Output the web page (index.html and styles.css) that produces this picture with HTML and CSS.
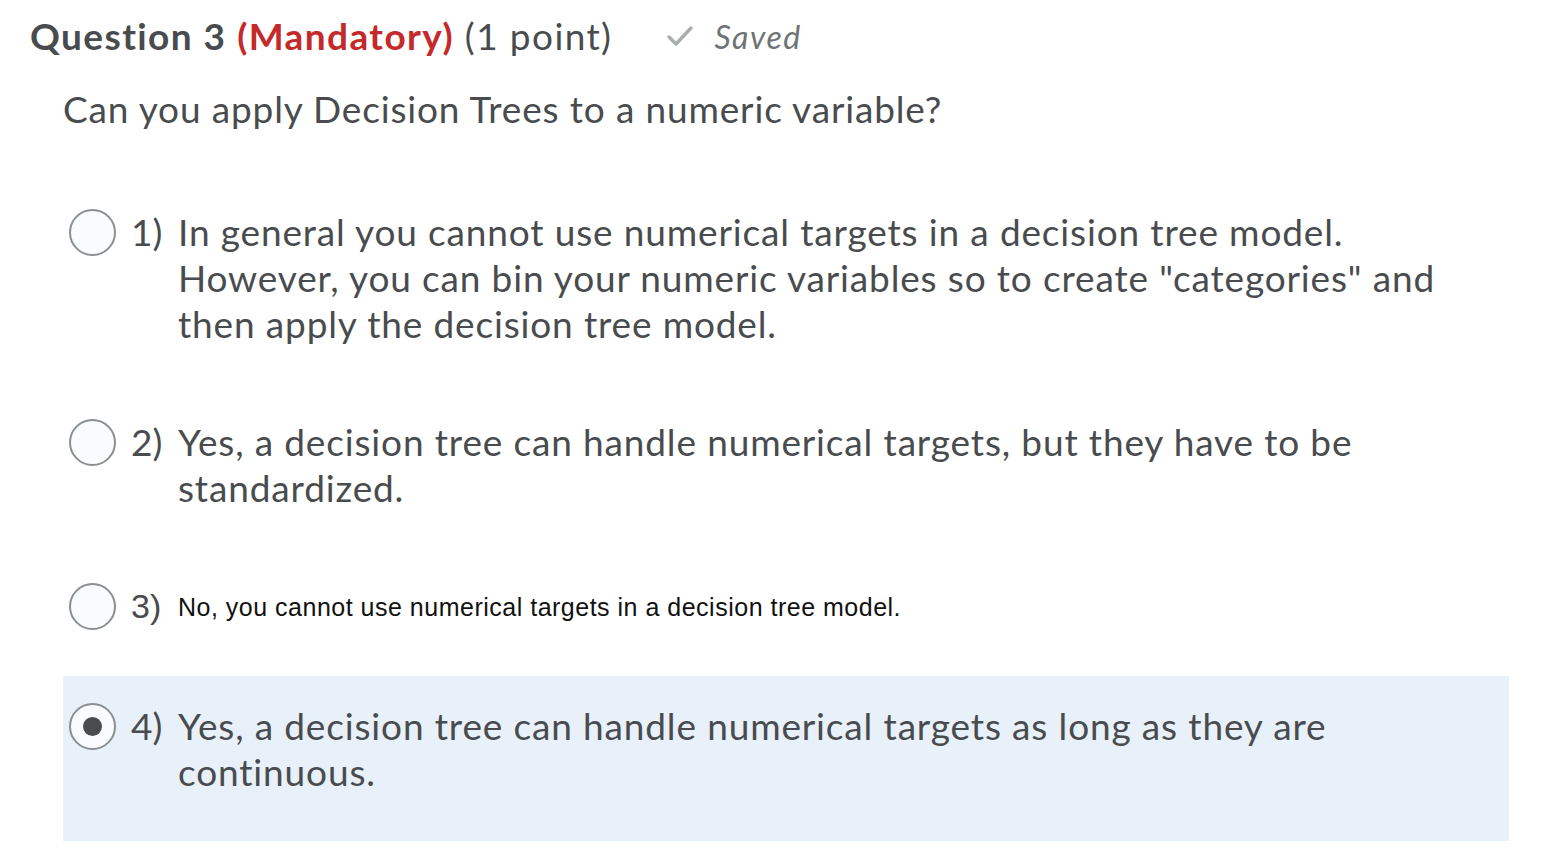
FILE: index.html
```html
<!DOCTYPE html>
<html lang="en">
<head>
<meta charset="utf-8">
<link rel="stylesheet" href="styles.css">
</head>
<body>
<div class="quiz">
  <div class="q-head">
    <h2 class="q-title"><span class="q-num">Question 3</span> <span class="q-mand">(Mandatory)</span> <span class="q-pts">(1 point)</span></h2>
    <div class="q-saved">
      <svg class="check" viewBox="0 0 28 24" width="28" height="24"><path d="M3 13 L10 20 L25 4" fill="none" stroke="#a9adb0" stroke-width="3.4" stroke-linecap="round" stroke-linejoin="round"/></svg>
      <span>Saved</span>
    </div>
  </div>
  <p class="q-text">Can you apply Decision Trees to a numeric variable?</p>
  <div class="options">
    <label class="opt">
      <span class="radio"></span>
      <span class="opt-num">1)</span>
      <span class="opt-text">In general you cannot use numerical targets in a decision tree model. However, you can bin your numeric variables so to create "categories" and then apply the decision tree model.</span>
    </label>
    <label class="opt">
      <span class="radio"></span>
      <span class="opt-num">2)</span>
      <span class="opt-text">Yes, a decision tree can handle numerical targets, but they have to be standardized.</span>
    </label>
    <label class="opt">
      <span class="radio"></span>
      <span class="opt-num alt">3)</span>
      <span class="opt-text alt">No, you cannot use numerical targets in a decision tree model.</span>
    </label>
    <label class="opt selected">
      <span class="radio checked"></span>
      <span class="opt-num">4)</span>
      <span class="opt-text">Yes, a decision tree can handle numerical targets as long as they are continuous.</span>
    </label>
  </div>
</div>
</body>
</html>
```
FILE: styles.css
```css
html, body {
  margin: 0;
  padding: 0;
  background: #ffffff;
}
body {
  font-family: Lato, "Open Sans", sans-serif;
  color: #494c4e;
  font-variant-ligatures: none;
}
.quiz {
  width: 1446px;
  padding: 0 0 0 30px;
}
.q-head {
  display: flex;
  align-items: center;
  height: 72px;
  gap: 54px;
}
.q-title {
  margin: 0;
  font-size: 37px;
  letter-spacing: 1.4px;
  font-weight: 400;
  line-height: 46px;
  white-space: nowrap;
}
.q-num {
  font-weight: 700;
}
.q-mand {
  font-weight: 700;
  color: #c42a2a;
}
.q-saved {
  display: flex;
  align-items: center;
  gap: 20px;
  color: #6e7376;
  font-style: italic;
  font-size: 32px;
  letter-spacing: 1.5px;
}
.check {
  display: block;
}
.q-text {
  margin: 0 0 0 33px;
  font-size: 37px;
  letter-spacing: 0.85px;
  line-height: 46px;
  padding-top: 14px;
}
.options {
  margin: 49px 0 0 33px;
  width: 1446px;
}
.opt {
  display: grid;
  grid-template-columns: 47px 62px 1fr;
  align-items: start;
  padding: 28px 0 44px 6px;
  font-size: 37px;
  letter-spacing: 0.85px;
  line-height: 46px;
}
.opt.selected {
  background: #e8f0fa;
  margin-top: 2px;
  padding-top: 27px;
  padding-bottom: 46px;
}
.radio {
  width: 43px;
  height: 43px;
  border: 2px solid #8a8f92;
  border-radius: 50%;
  background: #f9fbfe;
  display: flex;
  align-items: center;
  justify-content: center;
}
.radio.checked::after {
  content: "";
  width: 19px;
  height: 19px;
  border-radius: 50%;
  background: #494c4e;
}
.opt-num {
  padding-left: 15px;
  letter-spacing: 0;
}
.opt-num.alt {
  font-family: "Liberation Sans", Arial, sans-serif;
  font-size: 34px;
}
.opt-text {
  padding-right: 10px;
}
.opt-text.alt {
  font-family: "Liberation Sans", Arial, sans-serif;
  font-size: 25px;
  letter-spacing: 0.5px;
  color: #111111;
  padding-top: 1px;
}
```
